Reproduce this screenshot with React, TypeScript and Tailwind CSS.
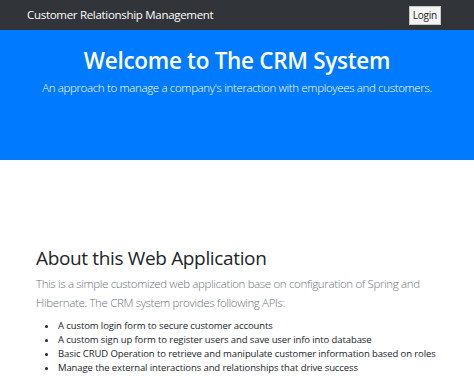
export default function App() {
  const apis = [
    "A custom login form to secure customer accounts",
    "A custom sign up form to register users and save user info into database",
    "Basic CRUD Operation to retrieve and manipulate customer information based on roles",
    "Manage the external interactions and relationships that drive success",
  ];

  return (
    <div className="min-h-[376px] w-[474px] bg-white font-['Open_Sans',sans-serif] text-[#212529]">
      <nav className="flex h-[30px] items-center justify-between bg-[#313438] pl-[27px] pr-[33px]">
        <span className="text-[11.5px] tracking-[-0.3px] text-white">Customer Relationship Management</span>
        <button className="h-[19px] border border-[#c8c8c8] bg-[#f4f4f4] px-[3px] text-[10px] leading-none tracking-[-0.2px] text-[#222]">
          Login
        </button>
      </nav>

      <header className="flex h-[130px] flex-col items-center bg-[#007bff] pt-[16px] text-white">
        <h1 className="text-[22.5px] leading-[30px] font-semibold tracking-[-0.3px]">Welcome to The CRM System</h1>
        <p className="mt-[3px] text-[11.5px] font-light tracking-[-0.35px]">
          An approach to manage a company's interaction with employees and customers.
        </p>
      </header>

      <section className="px-[36px] pt-[85px]">
        <h2 className="text-[19px] leading-[26px] font-medium tracking-[-0.35px]">About this Web Application</h2>
        <p className="mt-[3px] text-[11.5px] leading-[19px] font-light tracking-[-0.35px] text-[#6c757d]">
          This is a simple customized web application base on configuration of Spring and Hibernate. The CRM
          system provides following APIs:
        </p>
        <ul className="mt-[7px] list-disc pl-[22px] text-[9.5px] leading-[14px] tracking-[-0.1px] marker:text-[#212529]">
          {apis.map((item) => (
            <li key={item}>{item}</li>
          ))}
        </ul>
      </section>
    </div>
  );
}
